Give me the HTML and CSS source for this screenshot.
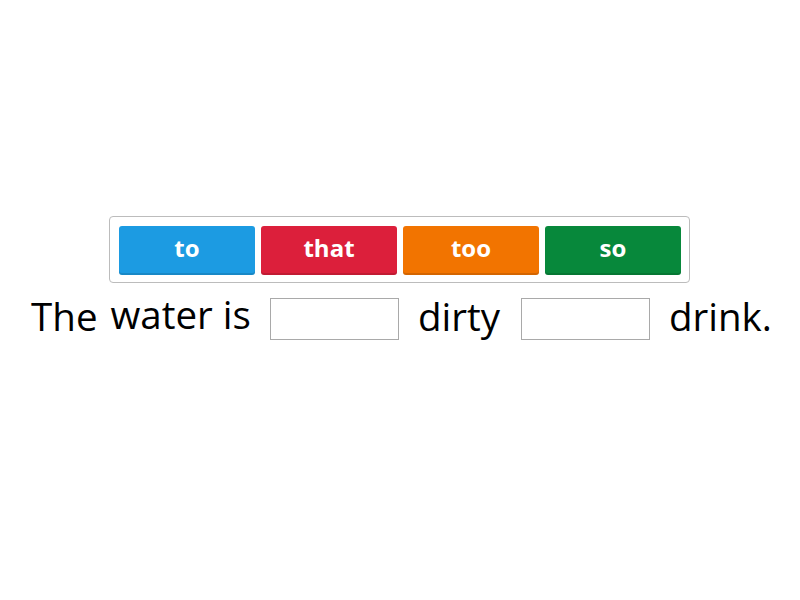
FILE: index.html
```html
<!DOCTYPE html>
<html>
<head>
<meta charset="utf-8">
<link rel="stylesheet" href="styles.css">
</head>
<body>
<div class="page">
  <div class="bank">
    <div class="tile blue">to</div>
    <div class="tile red">that</div>
    <div class="tile orange">too</div>
    <div class="tile green">so</div>
  </div>
  <div class="sentence">
    <span class="word w-the">The</span>
    <span class="word w-up">water is</span>
    <span class="slot"></span>
    <span class="word w-dirty">dirty</span>
    <span class="slot"></span>
    <span class="word">drink.</span>
  </div>
</div>
</body>
</html>
```

FILE: styles.css
```css
html, body {
  margin: 0;
  padding: 0;
  background: #ffffff;
}
body {
  font-family: "Open Sans", "DejaVu Sans", sans-serif;
  color: #000;
}
.page {
  width: 800px;
  height: 600px;
  display: flex;
  flex-direction: column;
  align-items: center;
  padding-top: 216px;
  box-sizing: border-box;
}
.bank {
  display: flex;
  gap: 6px;
  border: 1px solid #bcbcbc;
  border-radius: 4px;
  padding: 9px 8px 7px 9px;
  margin-left: -1px;
}
.tile {
  width: 136px;
  height: 49px;
  border-radius: 3px;
  color: #fff;
  font-weight: 700;
  font-size: 24px;
  display: flex;
  align-items: center;
  justify-content: center;
  box-shadow: inset 0 -2px 0 rgba(0,0,0,0.12);
  padding-bottom: 7px;
  box-sizing: border-box;
}
.blue { background: #1c9be2; }
.red { background: #dc1f3b; }
.orange { background: #f27400; }
.green { background: #07883b; }
.sentence {
  display: flex;
  align-items: flex-start;
  margin-top: 15px;
  margin-left: 3px;
}
.word {
  font-size: 38.5px;
  line-height: 42px;
  margin-top: -3px;
  margin-right: 19px;
}
.w-the { margin-right: 13px; }
.w-up { margin-top: -5px; }
.w-dirty { margin-right: 21px; }
.slot {
  width: 129px;
  height: 42px;
  border: 1px solid #a9a9a9;
  box-sizing: border-box;
  margin-right: 19px;
}
.word:last-child { margin-right: 0; }
```
